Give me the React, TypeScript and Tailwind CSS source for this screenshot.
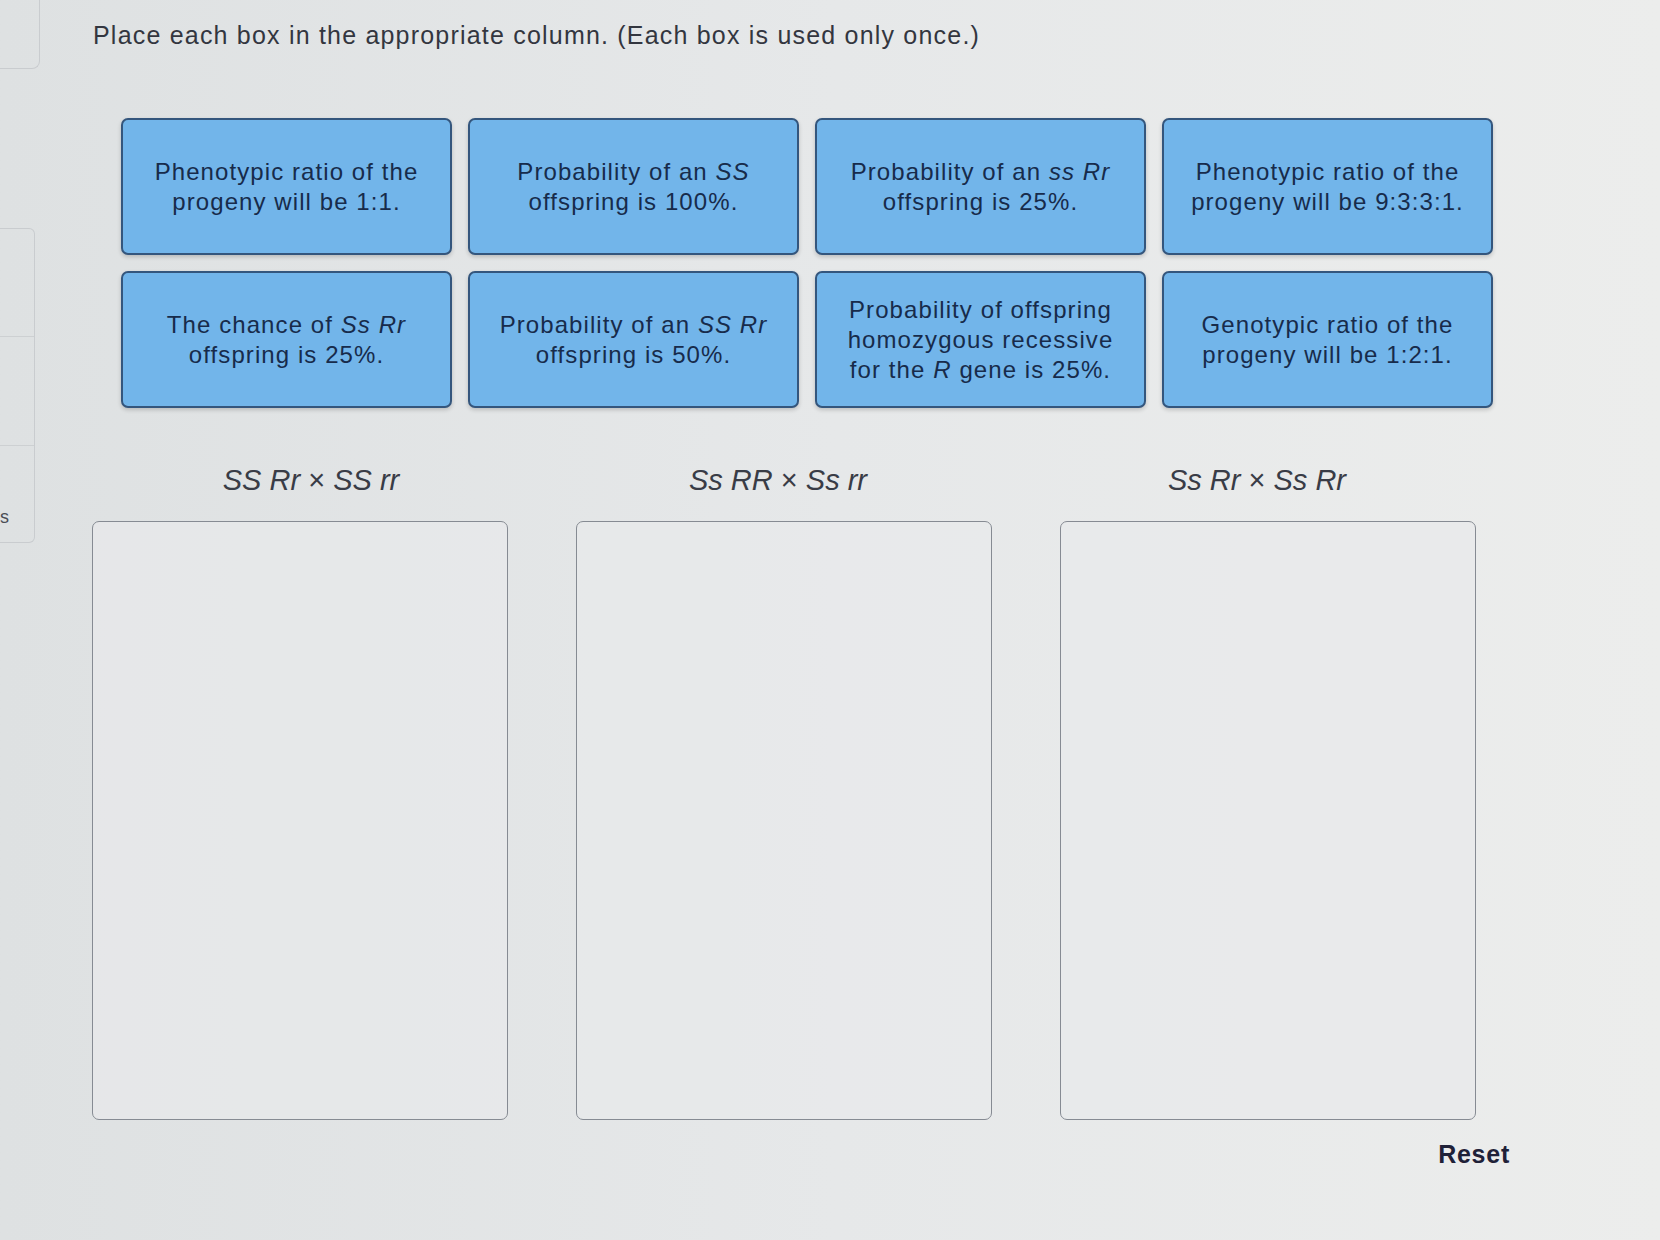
import type { ReactNode } from "react";

const font = { fontFamily: '"Liberation Sans", Arial, sans-serif' };

type Card = { lines: ReactNode[] };

const cards: Card[] = [
  { lines: ["Phenotypic ratio of the", "progeny will be 1:1."] },
  { lines: [<>Probability of an <i>SS</i></>, "offspring is 100%."] },
  { lines: [<>Probability of an <i>ss Rr</i></>, "offspring is 25%."] },
  { lines: ["Phenotypic ratio of the", "progeny will be 9:3:3:1."] },
  { lines: [<>The chance of <i>Ss Rr</i></>, "offspring is 25%."] },
  { lines: [<>Probability of an <i>SS Rr</i></>, "offspring is 50%."] },
  {
    lines: [
      "Probability of offspring",
      "homozygous recessive",
      <>for the <i>R</i> gene is 25%.</>,
    ],
  },
  { lines: ["Genotypic ratio of the", "progeny will be 1:2:1."] },
];

const columns = [
  { label: <><i>SS Rr</i> × <i>SS rr</i></>, shift: "pl-[22px]" },
  { label: <><i>Ss RR</i> × <i>Ss rr</i></>, shift: "pr-[12px]" },
  { label: <><i>Ss Rr</i> × <i>Ss Rr</i></>, shift: "pr-[22px]" },
];

function Sidebar() {
  return (
    <div className="flex flex-col shrink-0 w-[42px]">
      <div className="h-[69px] w-[40px] border-r border-b border-[#c9cccf] rounded-br-[8px]" />
      <div className="mt-[159px] w-[35px] border-r border-t border-b border-[#c9cccf] rounded-r-[6px] flex flex-col">
        <div className="h-[108px] border-b border-[#cdd0d2]" />
        <div className="h-[109px] border-b border-[#cdd0d2]" />
        <div className="h-[96px] pt-[62px]">
          <span className="block text-[18px] leading-none text-[#4a4d55]">s</span>
        </div>
      </div>
    </div>
  );
}

function AnswerBox({ card }: { card: Card }) {
  return (
    <div className="h-[137px] rounded-[7px] border-2 border-[#34567d] bg-[#72b5ea] shadow-[0_2px_4px_rgba(0,0,0,0.18)] flex flex-col items-center justify-center text-center text-[24px] leading-[30px] tracking-[0.045em] text-[#172b4b]">
      {card.lines.map((line, i) => (
        <span key={i} className="block whitespace-nowrap">
          {line}
        </span>
      ))}
    </div>
  );
}

export default function App() {
  return (
    <div
      className="min-h-[1240px] w-full flex bg-linear-to-r from-[#dee1e2] via-[#e6e8e9] to-[#ecedec] overflow-hidden"
      style={font}
    >
      <Sidebar />

      <div className="w-[1478px] pt-[20px] flex flex-col">
        <h1 className="ml-[51px] text-[25px] leading-[30px] tracking-[0.048em] text-[#33363f]">
          Place each box in the appropriate column. (Each box is used only once.)
        </h1>

        <div className="ml-[79px] mt-[68px] w-[1372px] grid grid-cols-4 gap-[16px]">
          {cards.map((card, i) => (
            <AnswerBox key={i} card={card} />
          ))}
        </div>

        <div className="ml-[50px] mt-[55px] grid grid-cols-[416px_416px_416px] gap-x-[68px]">
          {columns.map((col, i) => (
            <div key={i} className="flex flex-col">
              <div className={`h-[34px] text-center text-[29px] leading-[34px] text-[#393c46] ${col.shift}`}>
                {col.label}
              </div>
              <div className="mt-[24px] h-[599px] rounded-[7px] border-[1.5px] border-[#868b93] bg-[#e8eaeb]/70" />
            </div>
          ))}
        </div>

        <div className="mt-[19px] pr-[10px] text-right">
          <button className="text-[25px] leading-[30px] font-bold tracking-[0.03em] text-[#1f2138]">
            Reset
          </button>
        </div>
      </div>
    </div>
  );
}
